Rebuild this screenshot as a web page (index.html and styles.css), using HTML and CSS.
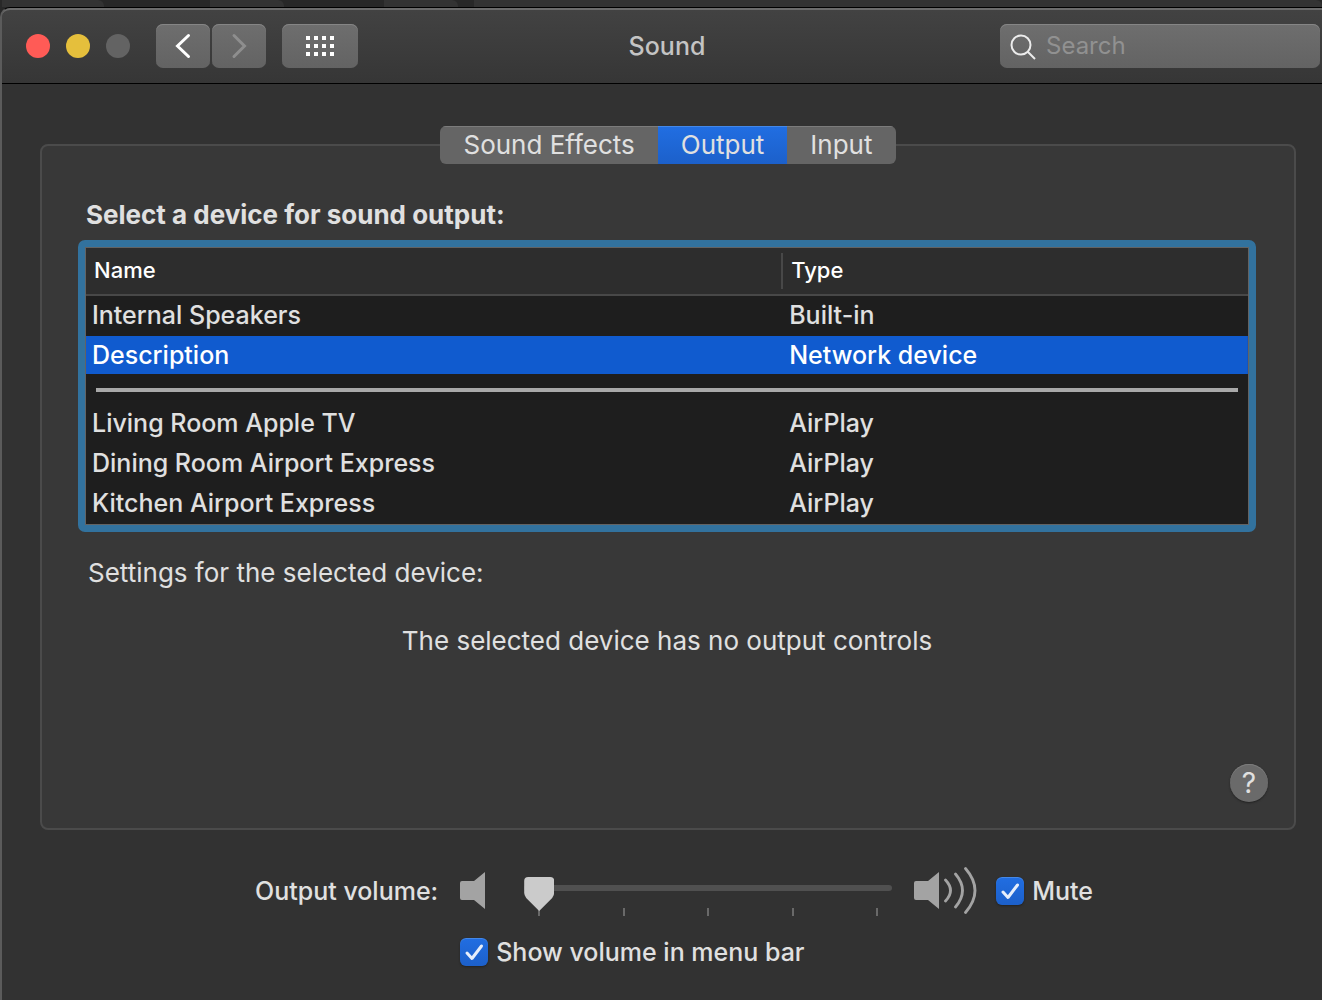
FILE: index.html
```html
<!DOCTYPE html>
<html lang="en">
<head>
<meta charset="utf-8">
<meta name="viewport" content="width=device-width, initial-scale=1">
<title>Sound</title>
<link rel="stylesheet" href="styles.css">
</head>
<body>
<div class="backdrop" aria-hidden="true">
  <span class="backdrop-tab wide"></span>
  <span class="backdrop-tab"></span>
  <span class="backdrop-tab"></span>
  <span class="backdrop-tab rest"></span>
</div>
<div class="window">
  <header class="toolbar">
    <div class="toolbar-left">
      <div class="lights">
        <button class="light close" aria-label="Close"></button>
        <button class="light minimize" aria-label="Minimize"></button>
        <button class="light zoom" aria-label="Zoom" disabled></button>
      </div>
      <div class="nav">
        <button class="tool" aria-label="Back">
          <svg width="54" height="44" viewBox="0 0 54 44"><path d="M32.500 11.500 21.500 22l11 10.500" fill="none" stroke="#fff" stroke-width="3" stroke-linecap="round"/></svg>
        </button>
        <button class="tool" aria-label="Forward" disabled>
          <svg width="54" height="44" viewBox="0 0 54 44"><path d="M22 11.500 32.500 22 22 32.500" fill="none" stroke="#8e8e8e" stroke-width="3" stroke-linecap="round"/></svg>
        </button>
      </div>
      <button class="tool all" aria-label="Show All">
        <svg width="76" height="44" viewBox="0 0 76 44"><path d="M24 14h28M24 22h28M24 30h28" stroke="#fff" stroke-width="4" stroke-dasharray="4 4"/></svg>
      </button>
    </div>
    <h1 class="title">Sound</h1>
    <div class="search">
      <svg width="28" height="28" viewBox="0 0 28 28"><g fill="none" stroke="#ececec" stroke-width="2"><circle cx="11" cy="13" r="9.500"/><path d="m17.500 19.500 7.500 7.500"/></g></svg>
      <input type="search" aria-label="Search" placeholder="Search">
    </div>
  </header>

  <main class="content">
    <div class="tabs" role="tablist">
      <button class="tab" role="tab">Sound Effects</button>
      <button class="tab selected" role="tab" aria-selected="true">Output</button>
      <button class="tab" role="tab">Input</button>
    </div>
    <section class="panel">
      <h2 class="heading">Select a device for sound output:</h2>
      <div class="device-list">
        <table class="devices">
          <thead>
            <tr><th class="name" scope="col">Name</th><th scope="col">Type</th></tr>
          </thead>
          <tbody>
            <tr><td>Internal Speakers</td><td>Built-in</td></tr>
            <tr class="chosen"><td>Description</td><td>Network device</td></tr>
            <tr class="separator"><td colspan="2"><hr></td></tr>
            <tr><td>Living Room Apple TV</td><td>AirPlay</td></tr>
            <tr><td>Dining Room Airport Express</td><td>AirPlay</td></tr>
            <tr><td>Kitchen Airport Express</td><td>AirPlay</td></tr>
          </tbody>
        </table>
      </div>
      <p class="settings">Settings for the selected device:</p>
      <p class="message">The selected device has no output controls</p>
      <button class="help" aria-label="Help">?</button>
    </section>

    <div class="volume">
      <label for="volume">Output volume:</label>
      <svg width="28" height="48" viewBox="0 0 28 48"><path d="M2 14h12l11-9v37l-11-9H2q-2 0-2-2V16q0-2 2-2Z" fill="#a3a3a3"/></svg>
      <div class="slider">
        <input id="volume" type="range" min="0" max="100" value="0">
        <div class="ticks"><i></i><i></i><i></i><i></i><i></i></div>
      </div>
      <svg width="64" height="48" viewBox="0 0 64 48"><path d="M2 14h12l11-9v37l-11-9H2q-2 0-2-2V16q0-2 2-2Z" fill="#a3a3a3"/><path d="M31.500 13q10 10.500 0 21M41.500 7q14 16.500 0 33M51.500 1.500q19 22 0 44" fill="none" stroke="#a3a3a3" stroke-width="2.800" stroke-linecap="round"/></svg>
      <label class="check mute"><input type="checkbox" checked>Mute</label>
      <label class="check menu-bar"><input type="checkbox" checked>Show volume in menu bar</label>
    </div>
  </main>
</div>
</body>
</html>
```
FILE: styles.css
```css
* {
  box-sizing: border-box;
}

body {
  margin: 0;
  min-height: 100vh;
  display: flex;
  flex-direction: column;
  background: #282828;
  color: #e0e0e0;
  font: 26px/32px Inter, "Liberation Sans", sans-serif;
}

button,
input {
  margin: 0;
  padding: 0;
  border: 0;
  color: inherit;
  font: inherit;
}

svg {
  display: block;
}

h1,
h2,
p {
  margin: 0;
}

.backdrop {
  display: flex;
  height: 7px;
  padding-left: 2px;
}

.backdrop-tab {
  width: 74px;
  margin-right: 100px;
  border-radius: 0 6px 0 0;
  background: #333;
}

.backdrop-tab.wide {
  width: 102px;
  margin-right: 106px;
}

.backdrop-tab.rest {
  flex: 1;
  margin: 0 0 0 -84px;
}

.window {
  flex: 1;
  border-top: 1px solid #000;
  border-left: 2px solid #5b5b5b;
  border-radius: 10px 0 0 0;
  background: #323232;
}

.toolbar {
  display: grid;
  grid-template-columns: 1fr auto 1fr;
  align-items: center;
  height: 76px;
  padding: 0 2px 2px 24px;
  border-top: 2px solid #6c6c6c;
  border-bottom: 1px solid #000;
  border-radius: 8px 0 0 0;
  background: linear-gradient(#424242, #363636);
}

.toolbar-left,
.lights,
.nav {
  display: flex;
  align-items: center;
}

.toolbar-left {
  gap: 16px;
}

.lights {
  gap: 16px;
  padding-right: 10px;
}

.light {
  width: 24px;
  height: 24px;
  border-radius: 50%;
}

.close {
  background: #ff5b56;
}

.minimize {
  background: #e5bf3c;
}

.zoom {
  background: #636363;
}

.nav {
  gap: 2px;
}

.tool,
.search {
  height: 44px;
  border-radius: 7px;
  background: linear-gradient(#6e6e6e, #636363);
  box-shadow: inset 0 1px #858585;
}

.title {
  padding-right: 12px;
  color: #c4c4c4;
  font-size: 25px;
  font-weight: 450;
}

.search {
  display: flex;
  align-items: center;
  justify-self: end;
  gap: 8px;
  width: 320px;
  padding: 0 10px;
  font-size: 24px;
}

.search input {
  flex: 1;
  min-width: 0;
  background: none;
  outline: none;
}

.search input::placeholder {
  color: #919191;
  opacity: 1;
}

.content {
  padding: 42px 26px 32px 38px;
}

.tabs {
  position: relative;
  z-index: 1;
  display: flex;
  width: max-content;
  margin: 0 auto;
  overflow: hidden;
  border-radius: 6px;
}

.tab {
  height: 38px;
  padding: 0 23px;
  background: #656565;
  box-shadow: inset 0 1px #7c7c7c;
}

.tab.selected {
  background: linear-gradient(#216ee2, #1c60ca);
  box-shadow: inset 0 1px #4488e8;
}

.panel {
  display: flex;
  flex-direction: column;
  margin-top: -20px;
  padding: 53px 38px 26px 36px;
  border: 2px solid #4b4b4b;
  border-radius: 8px;
  background: #383838;
}

.heading {
  padding-left: 8px;
  font-size: 26px;
  font-weight: 750;
}

.device-list {
  margin-top: 9px;
  border: 7px solid #32729e;
  border-radius: 7px;
  background: #1e1e1e;
}

.devices {
  width: 100%;
  border: 1px solid #636363;
  border-collapse: separate;
  border-spacing: 0;
  table-layout: fixed;
  font-size: 25px;
  font-weight: 450;
}

.devices th {
  height: 48px;
  padding: 0 8px 2px;
  border-bottom: 2px solid #484848;
  background: #2d2d2d;
  color: #fff;
  font-size: 22px;
  font-weight: 500;
  text-align: left;
}

.devices .name {
  width: 60%;
  background: linear-gradient(#484848, #484848) right center / 2px 36px no-repeat #2d2d2d;
}

.devices td {
  height: 40px;
  padding: 0 6px 2px;
}

.devices .chosen td {
  background: linear-gradient(#105bcf, #105bcf) top / 100% 38px no-repeat;
  color: #fff;
}

.devices .separator td {
  height: 28px;
  padding: 0 10px;
}

.separator hr {
  height: 4px;
  margin: 0;
  border: 0;
  background: #a9a9a9;
}

.settings {
  margin-top: 25px;
  padding-left: 10px;
}

.message {
  margin-top: 36px;
  text-align: center;
}

.help {
  align-self: flex-end;
  width: 38px;
  height: 38px;
  margin: 107px -12px 0 0;
  border-radius: 50%;
  background: #6a6a6a;
  box-shadow: inset 0 1px #7c7c7c, 0 1px 2px #222;
  font-size: 28px;
}

.volume {
  display: grid;
  grid-template-columns: repeat(5, auto);
  align-items: center;
  justify-content: center;
  margin-top: 35px;
  padding-left: 12px;
  font-size: 25px;
  font-weight: 450;
}

.volume > label:first-child {
  padding-right: 22px;
}

.slider {
  width: 368px;
  margin: 0 22px 0 36px;
  padding-top: 20px;
}

.slider input {
  display: block;
  position: relative;
  z-index: 1;
  width: 100%;
  height: 6px;
  border-radius: 3px;
  appearance: none;
  background: #505050;
}

.slider input::-webkit-slider-runnable-track {
  height: 6px;
}

.slider input::-webkit-slider-thumb {
  width: 30px;
  height: 34px;
  margin-top: -8px;
  appearance: none;
  background: #cbcbcb;
  clip-path: path("M4 0H26Q30 0 30 4V16Q30 18 28 21L15 34L2 21Q0 18 0 16V4Q0 0 4 0Z");
}

.ticks {
  display: flex;
  justify-content: space-between;
  padding: 17px 14px 0;
}

.ticks i {
  width: 2px;
  height: 8px;
  background: #696969;
}

.check {
  display: flex;
  align-items: center;
  gap: 8px;
}

.check input {
  width: 28px;
  height: 28px;
  border-radius: 6px;
  appearance: none;
  background:
    url("data:image/svg+xml,%3Csvg xmlns='http://www.w3.org/2000/svg' viewBox='0 0 28 28'%3E%3Cpath d='m7 15 5 5.500L21.500 8' fill='none' stroke='%23e6eefb' stroke-width='3' stroke-linecap='round' stroke-linejoin='round'/%3E%3C/svg%3E"),
    linear-gradient(#216ee2, #1c60ca);
  box-shadow: inset 0 1px #4488e8, 0 1px 2px #222;
}

.mute {
  padding-left: 18px;
}

.menu-bar {
  grid-column: 2 / -1;
  margin-top: 20px;
}
```
